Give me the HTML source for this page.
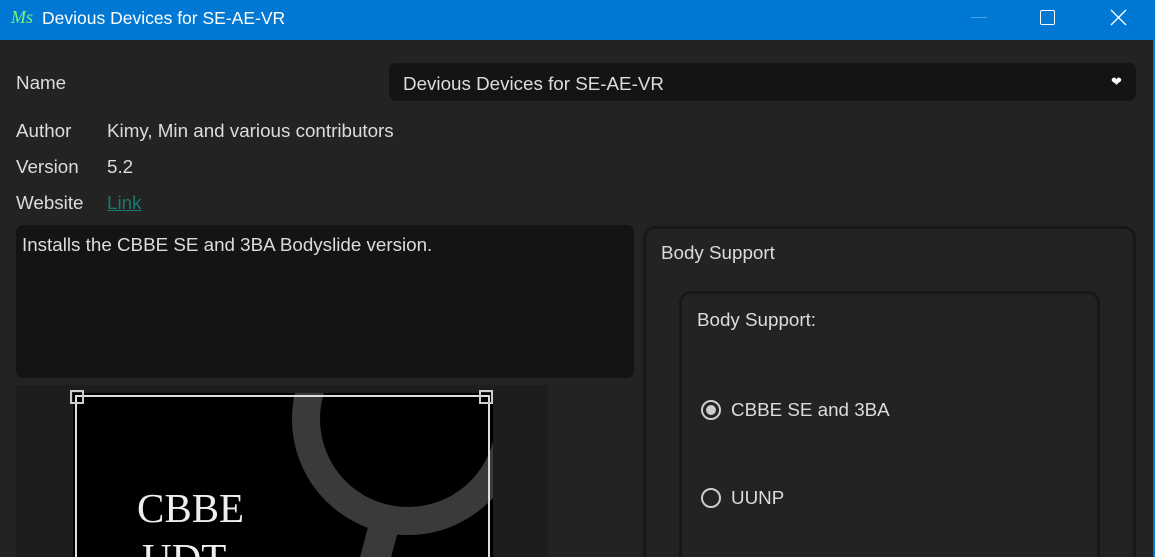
<!DOCTYPE html>
<html><head><style>
*{margin:0;padding:0;box-sizing:border-box}
html,body{width:1155px;height:557px;overflow:hidden}
body{background:#232323;font-family:"Liberation Sans",sans-serif;color:#dcdcdc;position:relative}
.t{position:absolute;font-size:18.8px;white-space:nowrap}
.tb{position:absolute;left:0;top:0;width:1155px;height:40px;background:#0078d4}
.clip{position:absolute;left:0;top:0;width:1155px;height:557px;overflow:hidden}
</style></head><body><div class="clip">
<div class="tb"></div>
<div class="t" style="left:11px;top:7px;color:#7cf07c;font-style:italic;font-family:'Liberation Serif',serif;font-size:18px">Ms</div>
<div class="t" style="left:42px;top:8px;color:#fff;font-size:17.5px">Devious Devices for SE-AE-VR</div>
<div style="position:absolute;left:971px;top:17px;width:16px;height:1px;background:#4aa0e6"></div>
<div style="position:absolute;left:1040px;top:10px;width:15px;height:15px;border:1.5px solid #fff;border-radius:2px"></div>
<svg style="position:absolute;left:1110px;top:9px" width="17" height="17"><path d="M1 1L16 16M16 1L1 16" stroke="#fff" stroke-width="1.4"/></svg>
<div style="position:absolute;left:1153px;top:40px;width:2px;height:517px;background:#0078d4"></div>

<div class="t" style="left:16px;top:72px">Name</div>
<div style="position:absolute;left:389px;top:63px;width:747px;height:38px;background:#141414;border-radius:7px"></div>
<div class="t" style="left:403px;top:73px">Devious Devices for SE-AE-VR</div>
<div class="t" style="left:1111px;top:74px;font-size:13px;color:#fff">❤</div>

<div class="t" style="left:16px;top:120px">Author</div>
<div class="t" style="left:107px;top:120px">Kimy, Min and various contributors</div>
<div class="t" style="left:16px;top:156px">Version</div>
<div class="t" style="left:107px;top:156px">5.2</div>
<div class="t" style="left:16px;top:192px">Website</div>
<div class="t" style="left:107px;top:192px;color:#1a7a6e;text-decoration:underline">Link</div>

<div style="position:absolute;left:16px;top:225px;width:618px;height:153px;background:#141414;border-radius:7px"></div>
<div class="t" style="left:22px;top:234px">Installs the CBBE SE and 3BA Bodyslide version.</div>

<div style="position:absolute;left:16px;top:385px;width:532px;height:172px;background:#1d1d1d"></div>
<div style="position:absolute;left:73px;top:393px;width:420px;height:164px;background:#000;overflow:hidden">
  <div style="position:absolute;left:219px;top:-90px;width:232px;height:232px;border:28px solid #3a3a3a;border-radius:50%"></div>
  <div style="position:absolute;left:290px;top:135px;width:30px;height:40px;background:#3a3a3a;transform:rotate(15deg)"></div>
</div>
<div style="position:absolute;left:75px;top:395px;width:415px;height:170px;border:2px solid #ddd"></div>
<div style="position:absolute;left:70px;top:390px;width:14px;height:14px;border:2px solid #ccc"></div>
<div style="position:absolute;left:479px;top:390px;width:14px;height:14px;border:2px solid #ccc"></div>
<div class="t" style="left:137px;top:484px;font-family:'Liberation Serif',serif;font-size:41px;color:#eee">CBBE</div>
<div class="t" style="left:142px;top:534px;font-family:'Liberation Serif',serif;font-size:41px;color:#eee">UDT</div>

<div style="position:absolute;left:643px;top:226px;width:493px;height:340px;border:3px solid #181818;border-radius:12px"></div>
<div class="t" style="left:661px;top:242px">Body Support</div>
<div style="position:absolute;left:679px;top:291px;width:421px;height:280px;border:3px solid #181818;border-radius:12px"></div>
<div class="t" style="left:697px;top:309px">Body Support:</div>
<div style="position:absolute;left:701px;top:400px;width:20px;height:20px;border:2px solid #ccc;border-radius:50%"></div>
<div style="position:absolute;left:706px;top:405px;width:10px;height:10px;background:#ccc;border-radius:50%"></div>
<div class="t" style="left:731px;top:399px">CBBE SE and 3BA</div>
<div style="position:absolute;left:701px;top:488px;width:20px;height:20px;border:2px solid #ccc;border-radius:50%"></div>
<div class="t" style="left:731px;top:487px">UUNP</div>
</div></body></html>
